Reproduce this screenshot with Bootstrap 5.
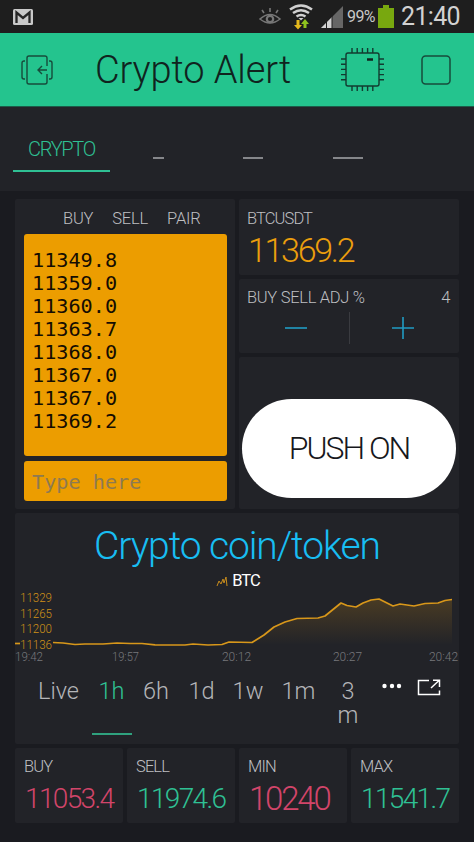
<!DOCTYPE html>
<html lang="en">
<head>
    <meta charset="UTF-8">
    <meta name="viewport" content="width=device-width, initial-scale=1.0">
    <title>Crypto Alert</title>

    <link href="https://cdn.jsdelivr.net/npm/bootstrap@5.3.0/dist/css/bootstrap.min.css" rel="stylesheet">

    <style>
        body {
            background: #1a1b20;
            color: #bebfc2;
            font-family: Roboto, "Liberation Sans", sans-serif;
            font-weight: 300;
            line-height: 1;
            width: 474px;
            height: 842px;
            overflow: hidden;
        }
        svg { display: block; }

        /* phone status bar */
        .status-bar { height: 33px; background: #1e1e1e; padding: 0 14px 0 13px; color: #d2d2d2; }
        .status-percent { font-size: 16px; font-weight: 400; letter-spacing: -.6px; margin: 1px 3px 0 4px; color: #c8c8c8; }
        .status-clock { font-size: 25px; font-weight: 400; letter-spacing: -.65px; margin-left: 7px; }

        /* app header */
        .app-header { height: 74px; background: #24c48e; color: #10231e; border-bottom: 1px solid #1b5c49; padding: 0 21px; }
        .app-title { font-size: 38px; font-weight: 300; letter-spacing: -.1px; margin: 0 0 0 42px; line-height: 1; }
        .icon-chip { margin-left: 50px; }
        .icon-stop { margin-left: 37px; }

        .tab-strip { height: 84px; background: #222328; padding: 25px 13px 0; margin-bottom: 8px; }
        .tab-item { height: 40px; font-size: 20px; padding-top: 8px; color: #85868a; }
        .tab-item.current { width: 97px; padding-top: 7px; color: #2fc094; border-bottom: 2px solid #2fc094; letter-spacing: -1.3px; }
        .dash { height: 2px; background: #85868a; margin-top: 17px; }
        .dash-one { width: 11px; margin-left: 43px; }
        .dash-two { width: 20px; margin-left: 79px; }
        .dash-three { width: 30px; margin-left: 70px; }

        .board { width: 444px; margin: 0 15px; gap: 4px; }
        .tile { background: #222328; border-radius: 2px; }
        .tile-label { font-size: 16.5px; letter-spacing: -.9px; white-space: nowrap; }
        .half { width: 220px; }

        .terminal-tile { height: 310px; padding-left: 9px; }
        .terminal, .terminal-input {
            background: #ec9d00;
            border: 0;
            border-radius: 3px;
            font-family: "DejaVu Sans Mono", monospace;
            font-weight: 400;
            font-size: 20.2px;
            padding-left: 8px;
            width: 203px;
        }
        .terminal { height: 222px; color: #150d02; line-height: 23.05px; padding-top: 15px; margin: 0 0 5px; overflow: hidden; }
        .terminal-input { height: 40px; padding-top: 3px; }
        .terminal-input::placeholder { color: #8e7a51; opacity: 1; }
        .col-heads { height: 35px; padding: 12px 0 0 39px; gap: 19px; letter-spacing: -.2px; }

        .price-tile { height: 76px; padding: 12px 9px 0 8px; }
        .price { color: #eb9e0d; font-size: 34px; letter-spacing: -2.3px; margin-top: 5px; padding-left: 1px; }
        .adjust-tile { height: 74px; padding: 11px 9px 0 8px; }
        .adjust-label { letter-spacing: -.3px; }
        .stepper { margin: 5px 36px 0 38px; }
        .step-line { width: 1px; height: 32px; background: #3a3b40; }
        .push-tile { height: 152px; }
        .push-btn {
            width: 214px; height: 99px; margin: 42px 0 0 3px; padding: 0 0 1px;
            background: #fff; color: #17181c; border: 0; border-radius: 50px;
            font-size: 32px; font-weight: 300; letter-spacing: -2px;
        }

        .chart-tile { height: 231px; padding-top: 14px; }
        .chart-title { font-size: 39px; font-weight: 300; line-height: 1; color: #18bdf2; letter-spacing: -1.1px; margin: 0; }
        .legend-row { margin-top: 7px; padding-left: 2px; }
        .legend-name { color: #fff; font-size: 16.5px; font-weight: 400; letter-spacing: -.9px; }
        .axis-y { fill: #cf9118; font-size: 13px; }
        .axis-x { fill: #77787c; font-size: 12.5px; }
        .ranges { font-size: 23.5px; padding-left: 20px; height: 66px; margin-top: 14px; }
        .range-item { width: 47px; height: 57px; text-align: center; line-height: 24px; color: #b4b5b8; }
        .range-item.current { color: #2fc094; }
        .range-item.current::after { content: ""; display: block; width: 40px; height: 2px; margin: 30px auto 0; background: #2fa17e; }
        .icon-more { margin: 4px 0 0 19px; }
        .icon-expand { margin-left: 15px; }

        .stat { width: 108px; height: 75px; padding: 11px 0 0 9px; }
        .stat-value { height: 34px; line-height: 34px; font-size: 28px; letter-spacing: -1.65px; margin-top: 6px; padding-left: 1px; white-space: nowrap; }
        .stat-value.short { font-size: 33px; letter-spacing: -2.2px; }
        .down { color: #d2456a; }
        .up { color: #2fc094; }
    </style>
</head>
<body>

    <div class="status-bar d-flex align-items-center">
        <svg class="me-auto" width="20" height="16" viewBox="0 0 20 16">
            <rect width="20" height="16" rx="1.500" fill="#c9c9c9"/>
            <path d="M3.500 14V3.500L10 9l6.500-5.500V14" fill="none" stroke="#262626" stroke-width="2.300"/>
        </svg>
        <svg width="22" height="17" viewBox="0 0 22 17" fill="none" stroke="#777" stroke-width="1.600">
            <path d="M1 11Q11 2 21 11Q11 19 1 11ZM11 4V0M5 5L3 2M17 5l2-3"/>
            <circle cx="11" cy="11" r="3.200" stroke-width="2.200"/>
        </svg>
        <svg class="ms-2" width="24" height="26" viewBox="0 0 24 26">
            <g fill="none" stroke="#d0d0d0" stroke-width="2.500">
                <path d="M1 5.500Q12-2.500 23 5.500M4 9Q12 3.500 20 9M7.500 12.500Q12 9.500 16.500 12.500"/>
            </g>
            <path d="M9.500 14h5l-2.500 2.500z" fill="#d0d0d0"/>
            <path d="M7.500 16h3v5h2.500l-4 4.500-4-4.500h2.500z" fill="#e5b91c"/>
            <path d="M14.500 24h3v-4h2.500l-4-5-4 5h2.500z" fill="#8fc31f"/>
        </svg>
        <svg class="ms-2" width="22" height="22" viewBox="0 0 22 22">
            <path d="M0 22L22 0V22Z" fill="#666"/>
            <path d="M0 22l5-5v5zM6 22v-6l5-5v11z" fill="#d2d2d2"/>
            <path d="M5.500 15v7M11 10v12" stroke="#1e1e1e"/>
        </svg>
        <span class="status-percent">99%</span>
        <svg width="16" height="23" viewBox="0 0 16 23"><path d="M0 3h5V0h6v3h5v20H0z" fill="#78a80f"/></svg>
        <span class="status-clock">21:40</span>
    </div>

    <header class="app-header d-flex align-items-center">
        <svg width="32" height="30" viewBox="0 0 32 30" fill="none" stroke="#174b3b" stroke-width="1.400">
            <path d="M26 11V3a2 2 0 0 0-2-2H8a2 2 0 0 0-2 2v24a2 2 0 0 0 2 2h16a2 2 0 0 0 2-2v-8"/>
            <path d="M4 6H3a2 2 0 0 0-2 2v14a2 2 0 0 0 2 2h1M28 6h1a2 2 0 0 1 2 2v14a2 2 0 0 1-2 2h-1M26 15h-9M21 11l-4 4 4 4"/>
        </svg>
        <h1 class="app-title">Crypto Alert</h1>
        <svg class="icon-chip" width="43" height="43" viewBox="0 0 43 43" fill="none" stroke="#123b30" stroke-width="1.400">
            <rect x="5" y="5" width="33" height="33" rx="2"/>
            <path d="M11 5V0M16.200 5V0M21.400 5V0M26.600 5V0M31.800 5V0M11 38v5M16.200 38v5M21.400 38v5M26.600 38v5M31.800 38v5"/>
            <path d="M5 11H0M5 16.200H0M5 21.400H0M5 26.600H0M5 31.800H0M38 11h5M38 16.200h5M38 21.400h5M38 26.600h5M38 31.800h5"/>
            <path d="M26 11.500h6" stroke="#10231e" stroke-width="2.500"/>
        </svg>
        <svg class="icon-stop" width="30" height="30" viewBox="0 0 30 30"><rect x="1" y="1" width="28" height="28" rx="3.500" fill="none" stroke="#174b3b" stroke-width="1.500"/></svg>
    </header>

    <nav class="tab-strip d-flex">
        <div class="tab-item current text-center">CRYPTO</div>
        <div class="tab-item"><div class="dash dash-one"></div></div>
        <div class="tab-item"><div class="dash dash-two"></div></div>
        <div class="tab-item"><div class="dash dash-three"></div></div>
    </nav>

    <main class="board d-flex flex-column">
        <div class="d-flex gap-1">
            <section class="tile half terminal-tile">
                <div class="tile-label col-heads d-flex"><span>BUY</span><span>SELL</span><span>PAIR</span></div>
<pre class="terminal">11349.8
11359.0
11360.0
11363.7
11368.0
11367.0
11367.0
11369.2</pre>
                <input class="terminal-input" type="text" placeholder="Type here">
            </section>
            <div class="half d-flex flex-column gap-1">
                <section class="tile price-tile">
                    <div class="tile-label">BTCUSDT</div>
                    <div class="price">11369.2</div>
                </section>
                <section class="tile adjust-tile">
                    <div class="tile-label adjust-label d-flex justify-content-between"><span>BUY SELL ADJ %</span><span>4</span></div>
                    <div class="stepper d-flex align-items-center justify-content-between">
                        <svg width="22" height="22"><path d="M0 11H22" stroke="#219cc3" stroke-width="1.600"/></svg>
                        <div class="step-line"></div>
                        <svg width="22" height="22"><path d="M0 11H22M11 0V22" stroke="#219cc3" stroke-width="1.600"/></svg>
                    </div>
                </section>
                <section class="tile push-tile"><button class="push-btn">PUSH ON</button></section>
            </div>
        </div>

        <section class="tile chart-tile">
            <h2 class="chart-title text-center">Crypto coin/token</h2>
            <div class="legend-row d-flex align-items-center justify-content-center gap-1">
                <svg width="12" height="12" viewBox="0 0 12 12"><path d="M1 11L3 6l2 3 2-5 1 4 2-6 1 9" fill="none" stroke="#c68b1d"/></svg>
                <span class="legend-name">BTC</span>
            </div>
            <svg width="444" height="75" viewBox="15 589 444 75">
                <defs>
                    <linearGradient id="fade" x1="0" y1="598" x2="0" y2="644" gradientUnits="userSpaceOnUse">
                        <stop offset="0" stop-color="#e59b12" stop-opacity=".2"/>
                        <stop offset="1" stop-color="#e59b12" stop-opacity="0"/>
                    </linearGradient>
                </defs>
                <path id="area" fill="url(#fade)"/>
                <path id="line" fill="none" stroke="#d8971a" stroke-width="1.700" stroke-linejoin="round"/>
                <path d="M15 642.500h5" stroke="#d8971a" stroke-width="1.700"/>
                <g class="axis-y">
                    <text x="20" y="601" textLength="32" lengthAdjust="spacingAndGlyphs">11329</text>
                    <text x="20" y="616.500" textLength="32" lengthAdjust="spacingAndGlyphs">11265</text>
                    <text x="20" y="632" textLength="32" lengthAdjust="spacingAndGlyphs">11200</text>
                    <text x="20" y="648" textLength="32" lengthAdjust="spacingAndGlyphs">11136</text>
                </g>
                <g class="axis-x">
                    <text x="15" y="660" textLength="28" lengthAdjust="spacingAndGlyphs">19:42</text>
                    <text x="112" y="660" textLength="27" lengthAdjust="spacingAndGlyphs">19:57</text>
                    <text x="222" y="660" textLength="29" lengthAdjust="spacingAndGlyphs">20:12</text>
                    <text x="333" y="660" textLength="29" lengthAdjust="spacingAndGlyphs">20:27</text>
                    <text x="429" y="660" textLength="29" lengthAdjust="spacingAndGlyphs">20:42</text>
                </g>
            </svg>
            <div class="ranges d-flex">
                <div class="range-item">Live</div>
                <div class="range-item current" style="width: 59px">1h</div>
                <div class="range-item" style="width: 30px">6h</div>
                <div class="range-item" style="width: 61px">1d</div>
                <div class="range-item" style="width: 32px">1w</div>
                <div class="range-item" style="width: 69px">1m</div>
                <div class="range-item" style="width: 30px">3<br>m</div>
                <svg class="icon-more" width="20" height="6" fill="#fff"><circle cx="2.500" cy="3" r="2.200"/><circle cx="10" cy="3" r="2.200"/><circle cx="17" cy="3" r="2.200"/></svg>
                <svg class="icon-expand" width="24" height="17" viewBox="0 0 24 17" fill="none" stroke="#fff" stroke-width="1.500"><path d="M12 1.500H1.500v14h21v-4M14 9l8-7.500M16 1.200h6.500V8"/></svg>
            </div>
        </section>

        <div class="d-flex gap-1">
            <div class="tile stat"><div class="tile-label">BUY</div><div class="stat-value down">11053.4</div></div>
            <div class="tile stat"><div class="tile-label">SELL</div><div class="stat-value up">11974.6</div></div>
            <div class="tile stat"><div class="tile-label">MIN</div><div class="stat-value short down">10240</div></div>
            <div class="tile stat"><div class="tile-label">MAX</div><div class="stat-value up">11541.7</div></div>
        </div>
    </main>

    <script src="https://cdn.jsdelivr.net/npm/bootstrap@5.3.0/dist/js/bootstrap.bundle.min.js"></script>

    <script>
        const points = [
            [53, 641.5], [63, 642], [75, 643.5], [85, 643], [103, 643], [117, 642], [130, 642.5],
            [142, 642.5], [155, 643.8], [185, 644], [193, 643], [208, 644], [222, 643.5], [229, 641],
            [252, 641.5], [264, 634], [274, 626], [285, 621], [297, 617.5], [318, 617], [325, 615],
            [341, 602], [347, 604.5], [356, 606], [363, 602], [371, 599], [379, 598], [383, 600],
            [393, 605], [400, 603], [414, 605], [425, 602.5], [438, 602], [445, 599.5], [452, 598.5]
        ];
        const line = 'M' + points.map(p => p.join(' ')).join('L');
        document.getElementById('line').setAttribute('d', line);
        document.getElementById('area').setAttribute('d', line + 'V644H53Z');
    </script>
</body>
</html>
